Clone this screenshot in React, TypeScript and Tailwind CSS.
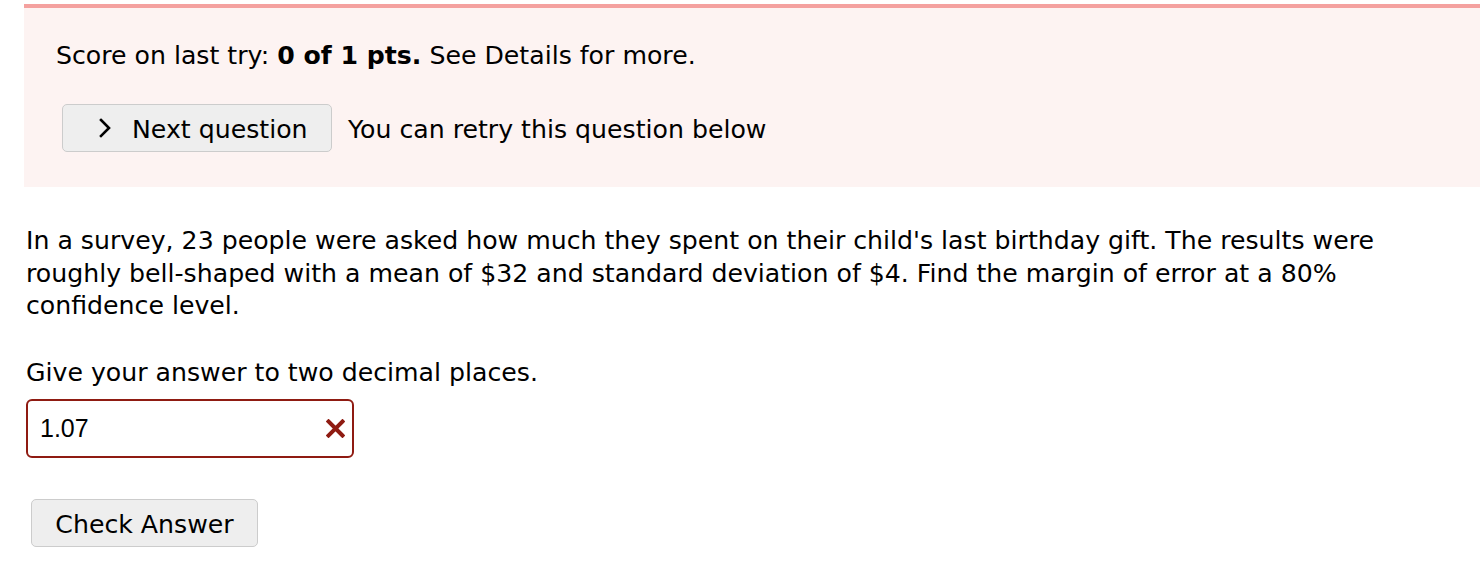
function ChevronIcon() {
  return (
    <svg width="12" height="20" viewBox="0 0 12 20" fill="none" className="shrink-0">
      <polyline points="2,2 10,10 2,18" stroke="#000" strokeWidth="2.6" strokeLinecap="square" strokeLinejoin="miter" />
    </svg>
  );
}

function WrongIcon() {
  return (
    <svg width="19" height="19" viewBox="0 0 19 19" className="shrink-0">
      <path d="M2.5 2.5 L16.5 16.5 M16.5 2.5 L2.5 16.5" stroke="#8f1b12" strokeWidth="4" strokeLinecap="square" />
    </svg>
  );
}

export default function App() {
  return (
    <div className="min-h-[564px] bg-white pl-[24px] pt-[4px] font-['DejaVu_Sans',sans-serif] text-[25.2px] leading-[32.5px] text-black">
      {/* score banner */}
      <div className="border-t-4 border-[#f4a19f] bg-[#fdf3f2] pl-[32px] pb-[35px] pt-[32px]">
        <p>
          Score on last try: <b>0 of 1 pts.</b> See Details for more.
        </p>
        <div className="mt-[31.5px] ml-[6px] flex items-center gap-[16px]">
          <button className="flex h-[48px] w-[270px] items-center gap-[21px] rounded-[5px] border-[1.5px] border-[#cccccc] bg-[#eeeeee] pl-[36px]">
            <ChevronIcon />
            <span className="pt-[5px]">Next question</span>
          </button>
          <span className="pt-[5px]">You can retry this question below</span>
        </div>
      </div>

      {/* question */}
      <div className="ml-[2px] mt-[38px] max-w-[1420px]">
        <p>
          In a survey, 23 people were asked how much they spent on their child's last birthday gift. The results were
          roughly bell-shaped with a mean of $32 and standard deviation of $4. Find the margin of error at a 80%
          confidence level.
        </p>
        <p className="mt-[34.5px]">Give your answer to two decimal places.</p>

        <div className="mt-[9.5px] flex h-[59px] w-[328px] items-center justify-between rounded-[6px] border-2 border-[#8f1b12] pl-[12px] pr-[7px]">
          <span className="font-['Liberation_Sans',Arial,sans-serif] text-[25px]">1.07</span>
          <WrongIcon />
        </div>

        <button className="mt-[41px] ml-[5px] flex h-[48px] w-[227px] items-center justify-center rounded-[5px] border-[1.5px] border-[#cccccc] bg-[#eeeeee] pt-[4px]">
          Check Answer
        </button>
      </div>
    </div>
  );
}
